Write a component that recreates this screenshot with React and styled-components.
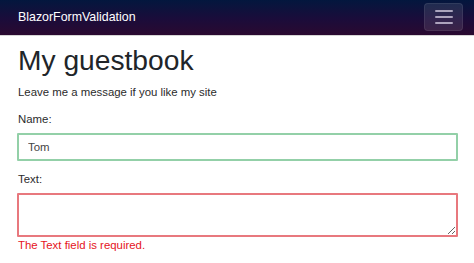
import React from "react";
import styled, { createGlobalStyle } from "styled-components";

const Global = createGlobalStyle`
  html, body { margin: 0; padding: 0; background: #fff; }
  body {
    font-family: "Liberation Sans", Arial, Helvetica, sans-serif;
    font-size: 11.4px;
    color: #212529;
  }
  * { box-sizing: border-box; }
`;

const Page = styled.div`
  width: 474px;
  height: 263px;
  overflow: hidden;
  background: #fff;
`;

const NavBar = styled.header`
  height: 36px;
  display: flex;
  align-items: center;
  justify-content: space-between;
  padding: 0 11px 0 18px;
  background: linear-gradient(180deg, #03173e 0%, #1b0c3a 55%, #2a0930 100%);
  border-bottom: 1px solid #d6d5d5;
`;

const Brand = styled.a`
  color: #fff;
  font-size: 12.4px;
  text-decoration: none;
  padding-bottom: 1px;
`;

const Toggler = styled.button`
  width: 39px;
  height: 28px;
  margin-bottom: 1px;
  display: flex;
  flex-direction: column;
  align-items: center;
  justify-content: center;
  gap: 4.5px;
  padding: 0;
  background: rgba(255, 255, 255, 0.1);
  border: 1px solid rgba(255, 255, 255, 0.08);
  border-radius: 4px;
`;

const Bar = styled.span`
  display: block;
  width: 18px;
  height: 1.5px;
  background: rgba(214, 206, 226, 0.75);
  border-radius: 1px;
`;

const Main = styled.main`
  padding: 0 16px 0 17px;
`;

const Title = styled.h1`
  margin: 7px 0 7px 1px;
  font-size: 28.2px;
  line-height: 34px;
  font-weight: 400;
  color: #212529;
`;

const Lead = styled.p`
  margin: 0 0 10px 1px;
  line-height: 17px;
  color: #2b2b2b;
`;

const Label = styled.label`
  display: block;
  margin: 0 0 5px 1px;
  line-height: 17px;
  color: #2b2b2b;
`;

const fieldBase = `
  display: block;
  width: 100%;
  font-family: "Liberation Sans", Arial, Helvetica, sans-serif;
  font-size: 11.4px;
  color: #444;
  background: #fff;
  border-radius: 1px;
  outline: none;
`;

const TextInput = styled.input`
  ${fieldBase}
  height: 28px;
  margin-bottom: 10px;
  padding: 0 9px;
  border: 2px solid ${(p) => (p.$valid ? "#93d0a8" : "#e8787e")};
`;

const TextArea = styled.textarea`
  ${fieldBase}
  height: 44px;
  padding: 4px 9px;
  border: 2px solid ${(p) => (p.$valid ? "#93d0a8" : "#e8787e")};
  resize: vertical;
`;

const ErrorText = styled.div`
  margin-left: 1px;
  line-height: 17px;
  color: #e5131c;
`;

export default function App() {
  return (
    <Page>
      <Global />
      <NavBar>
        <Brand href="#">BlazorFormValidation</Brand>
        <Toggler aria-label="menu">
          <Bar />
          <Bar />
          <Bar />
        </Toggler>
      </NavBar>
      <Main>
        <Title>My guestbook</Title>
        <Lead>Leave me a message if you like my site</Lead>
        <Label>Name:</Label>
        <TextInput $valid defaultValue="Tom" />
        <Label>Text:</Label>
        <TextArea $valid={false} defaultValue="" />
        <ErrorText>The Text field is required.</ErrorText>
      </Main>
    </Page>
  );
}
